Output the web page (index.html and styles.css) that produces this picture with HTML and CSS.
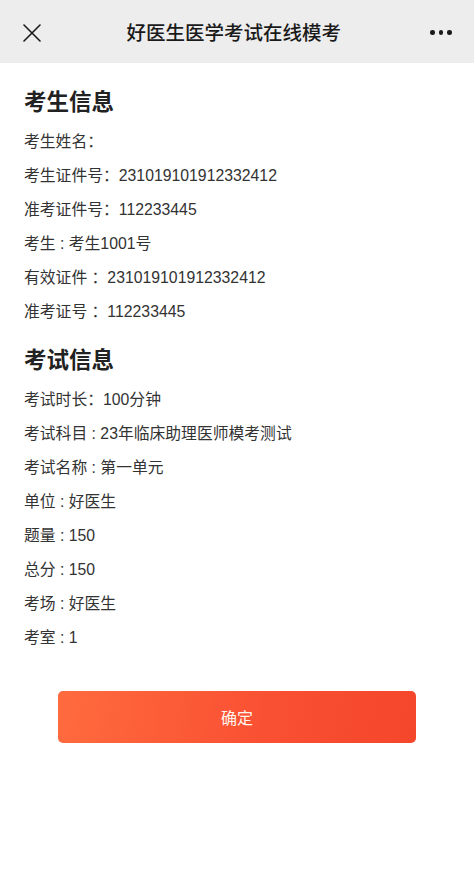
FILE: index.html
```html
<!DOCTYPE html>
<html lang="zh-CN">
<head>
<meta charset="utf-8">
<title>好医生医学考试在线模考</title>
<link rel="stylesheet" href="styles.css">
</head>
<body>
<header class="topbar">
  <span class="icon-close">
    <svg width="18" height="18" viewBox="0 0 18 18"><path d="M1 1 L17 17 M17 1 L1 17" stroke="#1a1a1a" stroke-width="1.6" fill="none" stroke-linecap="round"/></svg>
  </span>
  <h1 class="title">好医生医学考试在线模考</h1>
  <span class="icon-more">
    <i class="dot"></i><i class="dot"></i><i class="dot"></i>
  </span>
</header>
<main class="content">
  <section class="section">
    <h2 class="section-title">考生信息</h2>
    <p class="row">考生姓名：</p>
    <p class="row">考生证件号：231019101912332412</p>
    <p class="row">准考证件号：112233445</p>
    <p class="row">考生 : 考生1001号</p>
    <p class="row">有效证件 ：231019101912332412</p>
    <p class="row">准考证号 ：112233445</p>
  </section>
  <section class="section section-second">
    <h2 class="section-title">考试信息</h2>
    <p class="row">考试时长：100分钟</p>
    <p class="row">考试科目 : 23年临床助理医师模考测试</p>
    <p class="row">考试名称 : 第一单元</p>
    <p class="row">单位 : 好医生</p>
    <p class="row">题量 : 150</p>
    <p class="row">总分 : 150</p>
    <p class="row">考场 : 好医生</p>
    <p class="row">考室 : 1</p>
  </section>
  <div class="actions">
    <button class="btn-confirm" type="button">确定</button>
  </div>
</main>
</body>
</html>
```
FILE: styles.css
```css
* { box-sizing: border-box; }
html, body { margin: 0; padding: 0; background: #ffffff; }
body {
  font-family: "Liberation Sans", "Noto Sans CJK SC", sans-serif;
  color: #333333;
  width: 474px;
}
.topbar {
  height: 63px;
  background: #ededed;
  display: flex;
  align-items: center;
  justify-content: space-between;
  padding: 0 22px 0 23px;
  position: relative;
}
.icon-close { display: flex; width: 18px; height: 18px; margin-top: 2px; }
.title {
  margin: 0;
  font-size: 19.5px;
  font-weight: 500;
  color: #1a1a1a;
  font-family: "Noto Sans CJK SC", sans-serif;
  line-height: 1;
  margin-top: 1px;
  padding-right: 4px;
}
.icon-more { display: flex; gap: 4px; align-items: center; margin-top: 2px; }
.dot { display: block; width: 4.5px; height: 4.5px; border-radius: 50%; background: #1a1a1a; }
.content { padding: 0 24px; }
.section-title {
  margin: 20px 0 8px;
  font-size: 22.5px;
  line-height: 34px;
  font-weight: 700;
  color: #222222;
  font-family: "Noto Sans CJK SC", sans-serif;
}
.section-second .section-title { margin-top: 12px; }
.row {
  margin: 0;
  font-size: 15.8px;
  line-height: 34px;
  color: #333333;
  white-space: pre;
}
.actions {
  display: flex;
  justify-content: center;
  margin-top: 36px;
}
.btn-confirm {
  width: 358px;
  height: 52px;
  border: none;
  border-radius: 5px;
  background: linear-gradient(100deg, #ff6b3e 0%, #f94f32 60%, #f4462b 100%);
  color: #fff4ee;
  font-size: 16px;
  font-family: "Noto Sans CJK SC", sans-serif;
  padding: 0;
}
```
